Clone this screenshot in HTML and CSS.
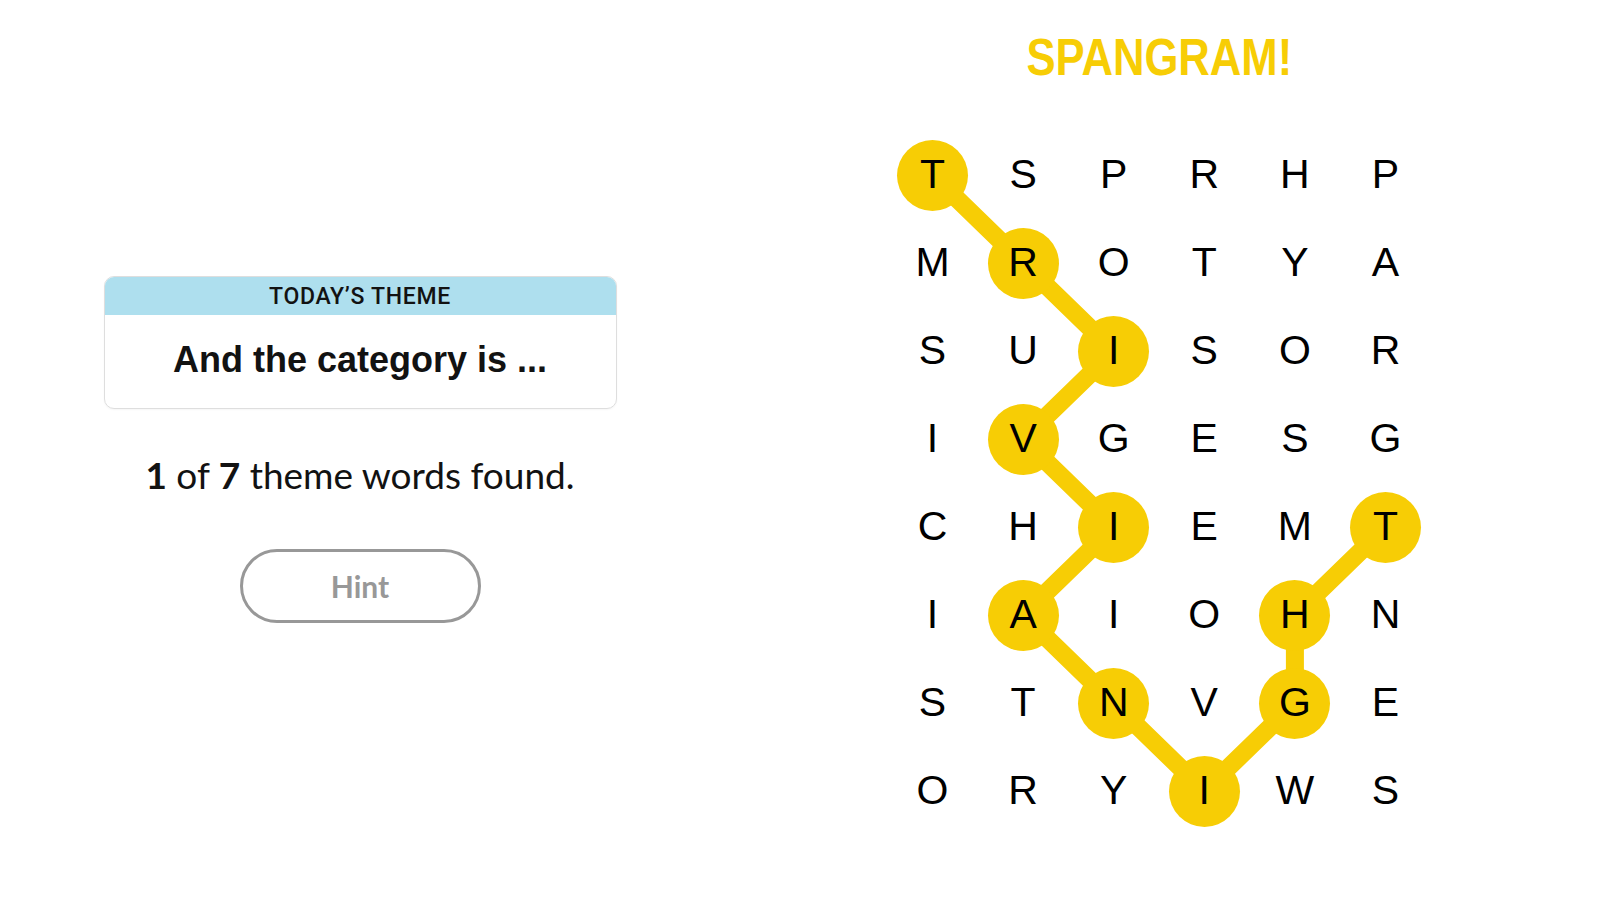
FILE: index.html
```html
<!DOCTYPE html>
<html lang="en">
<head>
<meta charset="utf-8">
<title>Strands</title>
<link rel="stylesheet" href="styles.css">
</head>
<body>
<main class="page">
  <section class="left">
    <div class="card">
      <div class="card-head">TODAY’S THEME</div>
      <div class="card-body">And the category is ...</div>
    </div>
    <p class="counter"><b>1</b> of <b>7</b> theme words found.</p>
    <button class="hint" type="button">Hint</button>
  </section>
  <section class="right">
    <h1 class="title"><span>SPANGRAM!</span></h1>
    <div class="board">
      <svg class="path" width="544" height="704" viewBox="0 0 543.6 704" aria-hidden="true">
        <polyline points="45.3,44 135.9,132 226.5,220 135.9,308 226.5,396 135.9,484 226.5,572 317.1,660 407.7,572 407.7,484 498.3,396" fill="none" stroke="#f7cd05" stroke-width="18" stroke-linejoin="round" stroke-linecap="round"/>
      </svg>
      <div class="grid">
        <div class="cell sel"><span>T</span></div><div class="cell"><span>S</span></div><div class="cell"><span>P</span></div><div class="cell"><span>R</span></div><div class="cell"><span>H</span></div><div class="cell"><span>P</span></div>
        <div class="cell"><span>M</span></div><div class="cell sel"><span>R</span></div><div class="cell"><span>O</span></div><div class="cell"><span>T</span></div><div class="cell"><span>Y</span></div><div class="cell"><span>A</span></div>
        <div class="cell"><span>S</span></div><div class="cell"><span>U</span></div><div class="cell sel"><span>I</span></div><div class="cell"><span>S</span></div><div class="cell"><span>O</span></div><div class="cell"><span>R</span></div>
        <div class="cell"><span>I</span></div><div class="cell sel"><span>V</span></div><div class="cell"><span>G</span></div><div class="cell"><span>E</span></div><div class="cell"><span>S</span></div><div class="cell"><span>G</span></div>
        <div class="cell"><span>C</span></div><div class="cell"><span>H</span></div><div class="cell sel"><span>I</span></div><div class="cell"><span>E</span></div><div class="cell"><span>M</span></div><div class="cell sel"><span>T</span></div>
        <div class="cell"><span>I</span></div><div class="cell sel"><span>A</span></div><div class="cell"><span>I</span></div><div class="cell"><span>O</span></div><div class="cell sel"><span>H</span></div><div class="cell"><span>N</span></div>
        <div class="cell"><span>S</span></div><div class="cell"><span>T</span></div><div class="cell sel"><span>N</span></div><div class="cell"><span>V</span></div><div class="cell sel"><span>G</span></div><div class="cell"><span>E</span></div>
        <div class="cell"><span>O</span></div><div class="cell"><span>R</span></div><div class="cell"><span>Y</span></div><div class="cell sel"><span>I</span></div><div class="cell"><span>W</span></div><div class="cell"><span>S</span></div>
      </div>
    </div>
  </section>
</main>
</body>
</html>
```
FILE: styles.css
```css
html, body {
  margin: 0;
  padding: 0;
  background: #ffffff;
}
body {
  width: 1600px;
  height: 900px;
  overflow: hidden;
  font-family: "Liberation Sans", Arial, sans-serif;
  color: #000;
}
.page {
  display: flex;
  height: 900px;
}
.left {
  width: 720px;
  display: flex;
  flex-direction: column;
  align-items: center;
  padding-top: 276px;
  box-sizing: border-box;
}
.card {
  width: 513px;
  box-sizing: border-box;
  border: 1px solid #dedede;
  border-radius: 10px;
  overflow: hidden;
  box-shadow: 0 1px 2px rgba(0,0,0,0.04);
}
.card-head {
  height: 38px;
  background: #aedfee;
  display: flex;
  align-items: center;
  justify-content: center;
  font-family: Roboto, "Liberation Sans", sans-serif;
  font-weight: 500;
  font-size: 23px;
  letter-spacing: 0.7px;
  color: #121212;
}
.card-body {
  padding: 23px 0 26px;
  line-height: 44px;
  text-align: center;
  font-family: "Liberation Sans", Arial, sans-serif;
  font-weight: 700;
  font-size: 36px;
  color: #121212;
}
.counter {
  margin: 44px 0 0;
  font-family: Lato, "Liberation Sans", sans-serif;
  font-size: 37px;
  line-height: 44px;
  color: #121212;
}
.counter b {
  font-weight: 700;
}
.hint {
  margin-top: 52px;
  width: 241px;
  height: 74px;
  border: 3px solid #989898;
  border-radius: 37px;
  background: #fff;
  color: #989898;
  font-family: Lato, "Liberation Sans", sans-serif;
  font-weight: 700;
  font-size: 30px;
  padding: 0;
}
.right {
  width: 878px;
  display: flex;
  flex-direction: column;
  align-items: center;
}
.title {
  margin: 28px 0 0;
  height: 60px;
  line-height: 60px;
  font-family: "Liberation Sans", sans-serif;
  font-weight: 700;
  font-size: 51px;
  color: #f7cd05;
}
.title span {
  display: inline-block;
  transform: scaleX(0.855);
}
.board {
  position: relative;
  margin-top: 43px;
  width: 543.6px;
  height: 704px;
}
.path {
  position: absolute;
  left: 0;
  top: 0;
  z-index: 0;
}
.grid {
  position: relative;
  z-index: 1;
  display: grid;
  grid-template-columns: repeat(6, 90.6px);
  grid-template-rows: repeat(8, 88px);
}
.cell {
  display: flex;
  align-items: center;
  justify-content: center;
}
.cell span {
  width: 71px;
  height: 71px;
  border-radius: 50%;
  box-sizing: border-box;
  padding-bottom: 2px;
  display: flex;
  align-items: center;
  justify-content: center;
  font-family: "Liberation Sans", Arial, sans-serif;
  font-size: 41px;
  color: #000;
}
.cell.sel span {
  background: #f7cd05;
}
```
